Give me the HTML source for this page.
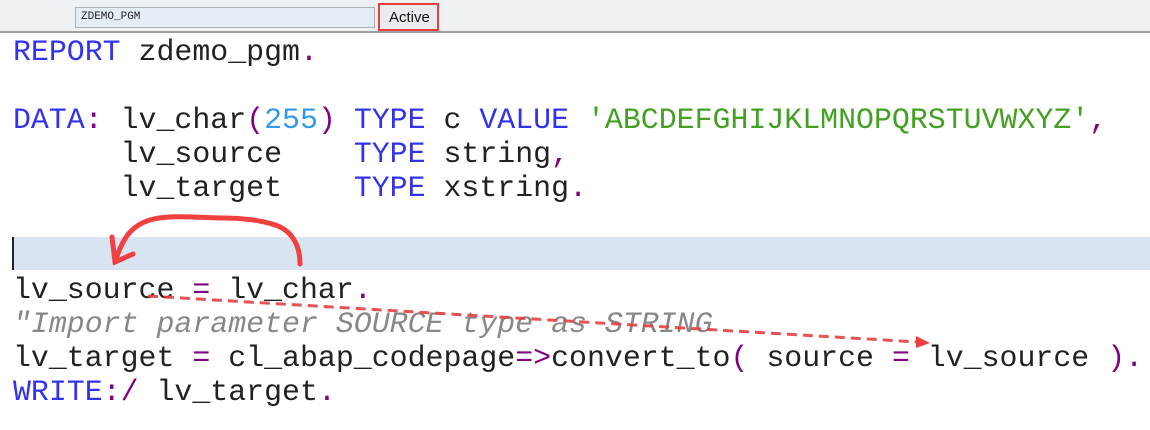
<!DOCTYPE html>
<html><head><style>
html,body{margin:0;padding:0;width:1150px;height:430px;overflow:hidden;background:#fff}
.top{position:absolute;left:0;top:0;width:1150px;height:31px;background:#eef1f4;border-bottom:2px solid #a0a0a0}
.inp{position:absolute;left:75px;top:7px;width:300px;height:21px;background:#e4ecf4;border:1px solid #a8b0b8;box-sizing:border-box;font:11px "Liberation Mono",monospace;padding:3px 0 0 5px;color:#222}
.act{position:absolute;left:378px;top:3px;width:61px;height:28px;border:2px solid #e84040;box-sizing:border-box;font:15px "Liberation Sans",sans-serif;padding:4px 0 0 9px;color:#111;background:#e8ecf0}
.code{position:absolute;left:13px;top:35px;font:29.9px/34px "Liberation Mono",monospace;white-space:pre;color:#222}
.hl{position:absolute;left:12px;top:237px;width:1138px;height:33px;background:#d8e4f2}
.cur{position:absolute;left:12px;top:237px;width:2px;height:33px;background:#222}
.k{color:#3333ee}.n{color:#3399ee}.s{color:#44a022}.c{color:#888;font-style:italic}.p{color:#800080}
svg{position:absolute;left:0;top:0}
</style></head><body>
<div class="top"><div class="inp">ZDEMO_PGM</div><div class="act">Active</div></div>
<div class="hl"></div><div class="cur"></div>
<div class="code"><span class="k">REPORT</span> zdemo_pgm<span class="p">.</span>

<span class="k">DATA</span><span class="p">:</span> lv_char<span class="p">(</span><span class="n">255</span><span class="p">)</span> <span class="k">TYPE</span> c <span class="k">VALUE</span> <span class="s">'ABCDEFGHIJKLMNOPQRSTUVWXYZ'</span><span class="p">,</span>
      lv_source    <span class="k">TYPE</span> string<span class="p">,</span>
      lv_target    <span class="k">TYPE</span> xstring<span class="p">.</span>


lv_source <span class="p">=</span> lv_char<span class="p">.</span>
<span class="c">"Import parameter SOURCE type as STRING</span>
lv_target <span class="p">=</span> cl_abap_codepage<span class="p">=&gt;</span>convert_to<span class="p">(</span> source <span class="p">=</span> lv_source <span class="p">).</span>
<span class="k">WRITE</span><span class="p">:/</span> lv_target<span class="p">.</span></div>
<svg width="1150" height="430">
<path d="M300 264 C300 245 292 232 278 226 C262 220 240 218 225 218 C200 218 170 214 150 220 C130 226 122 240 115 262" fill="none" stroke="#f04040" stroke-width="5" stroke-linecap="round"/>
<path d="M112 237 L115 262 L133 254" fill="none" stroke="#f04040" stroke-width="5" stroke-linecap="round"/>
<path d="M148 296 L918 342" stroke="#e84040" stroke-width="3" stroke-dasharray="10 6" opacity=".9"/>
<path d="M916 336 L930 343 L916 348 Z" fill="#e84040"/>
</svg>
</body></html>
